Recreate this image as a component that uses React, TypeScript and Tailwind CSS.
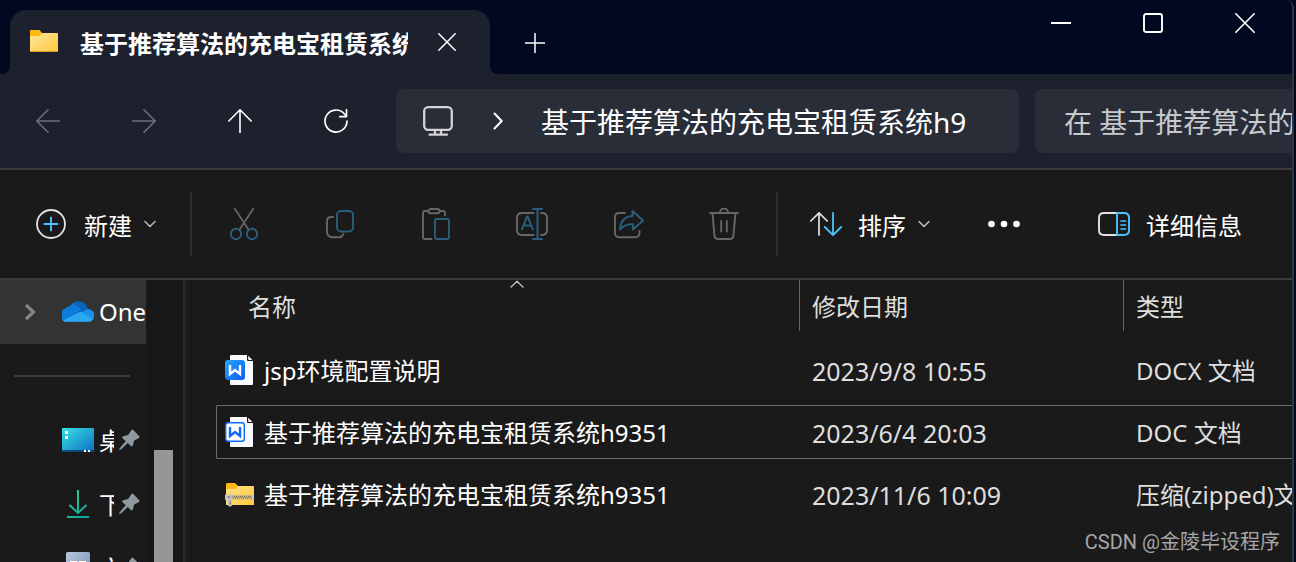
import React from "react";

type IconProps = { className?: string };

const line = {
  fill: "none",
  strokeLinecap: "round" as const,
  strokeLinejoin: "round" as const,
};

function FolderIcon() {
  return (
    <svg width="28" height="24" viewBox="0 0 28 24" aria-hidden="true">
      <defs>
        <linearGradient id="folderBody" x1="0" y1="0" x2="1" y2="1">
          <stop offset="0" stopColor="#ffe7a0" />
          <stop offset="1" stopColor="#ffc93a" />
        </linearGradient>
      </defs>
      <path d="M0 1q0-1 1-1h8.500l2.700 3.200L9 8H0z" fill="#fdb813" />
      <path d="M0 6h9l3.200-3H27q1 0 1 1v17.600H0z" fill="url(#folderBody)" />
      <path d="M0 21h28q0 1-1 1H1q-1 0-1-1z" fill="#dd9c20" />
    </svg>
  );
}

function ZipIcon() {
  return (
    <svg width="30" height="24" viewBox="0 0 30 24" aria-hidden="true">
      <defs>
        <linearGradient id="zipBody" x1="0" y1="0" x2="1" y2="1">
          <stop offset="0" stopColor="#ffe08a" />
          <stop offset="1" stopColor="#ffc93a" />
        </linearGradient>
      </defs>
      <path d="M1 1.2Q1 0 2.2 0H10l3.4 3.2L10 7H1z" fill="#fdb813" />
      <path d="M1 6h9l3-3h15q1 0 1 1v18H1z" fill="url(#zipBody)" />
      <path d="M7 12h22v5H7z" fill="#dcc27c" />
      <path d="M7 13.500h22" stroke="#6e6650" strokeWidth="1.400" strokeDasharray="1 1" />
      <path d="M8 15h21" stroke="#857c62" strokeWidth="1.400" strokeDasharray="1 1" />
      <rect x="27" y="12" width="2" height="4" fill="#c9c9c9" />
      <path d="M0 11.500h2v1h2v-1h3.500V17H7v5q0 1.400-1.400 1.400H4.400Q3 23.400 3 22v-5H0z" fill="#c4c4c4" />
      <path d="M2.500 14h3" stroke="#666" />
      <rect x="4.300" y="18.500" width="1.500" height="3" fill="#848484" />
    </svg>
  );
}

function WordIcon({ solid }: { solid: boolean }) {
  return (
    <svg width="30" height="32" viewBox="0 0 30 32" aria-hidden="true">
      <defs>
        <linearGradient id="wordBadge" x1="0" y1="0" x2="1" y2="1">
          <stop offset="0" stopColor="#2aa3ff" />
          <stop offset="1" stopColor="#0a5cf5" />
        </linearGradient>
      </defs>
      <path d="M6 0h16v5q0 1 1 1h5v23q0 1-1 1H6q-1 0-1-1V1q0-1 1-1z" fill="#f8faff" />
      <path d="M23.200.800 27.400 5h-3.200q-1 0-1-1z" fill="#ffffff" />
      <rect
        x="0.700"
        y="5.700"
        width="18.600"
        height="18.600"
        rx="2.500"
        fill={solid ? "url(#wordBadge)" : "#ffffff"}
        stroke={solid ? "url(#wordBadge)" : "#1268f5"}
        strokeWidth="1.400"
      />
      <path
        d="M5 10v9l5-4 5 4v-9"
        fill="none"
        stroke={solid ? "#ffffff" : "#1268f5"}
        strokeWidth="2.400"
      />
    </svg>
  );
}

function CloudIcon() {
  return (
    <svg width="32" height="22" viewBox="0 0 32 22" aria-hidden="true">
      <defs>
        <clipPath id="cloud">
          <path d="M6.500 20.800A6.500 6.500 0 0 1 3.600 7.600 8 8 0 0 1 8.300 5 9.600 9.600 0 0 1 26 8.200a6.300 6.300 0 0 1 0 12.600z" />
        </clipPath>
      </defs>
      <g clipPath="url(#cloud)">
        <path d="M0 0h32v22H0z" fill="#0a64bd" />
        <path d="M0 2h8.500c4 1 7 4 10.500 6L3 22H0z" fill="#0d7bdc" />
        <path d="M17 12.500 26 8h6v14h-8z" fill="#1a90e6" />
        <path d="M1 19.500 18.500 10.500 31 18v4H1z" fill="#2aa7ef" />
      </g>
    </svg>
  );
}

function DesktopIcon() {
  return (
    <svg width="32" height="24" viewBox="0 0 32 24" aria-hidden="true">
      <defs>
        <linearGradient id="desk" x1="0" y1="0" x2="1" y2="1">
          <stop offset="0" stopColor="#36e0e4" />
          <stop offset="1" stopColor="#0f6fc2" />
        </linearGradient>
      </defs>
      <rect width="32" height="24" rx="1" fill="url(#desk)" />
      <path d="M0 22h32v1q0 1-1 1H1q-1 0-1-1z" fill="#0b4a78" />
      <path d="M3 3h3v3H3zM3 8h3v3H3zM22 22h2v2h-2zM26 22h2v2h-2z" fill="#ffffff" />
    </svg>
  );
}

function DownloadIcon() {
  return (
    <svg width="32" height="28" viewBox="0 0 32 28" aria-hidden="true">
      <defs>
        <linearGradient id="down" gradientUnits="userSpaceOnUse" x1="8" y1="0" x2="26" y2="26">
          <stop offset="0" stopColor="#35cf85" />
          <stop offset="1" stopColor="#14a5a0" />
        </linearGradient>
      </defs>
      <path d="M16 0v23M7.500 15l8.500 8 8.500-8M5 27h22" fill="none" stroke="url(#down)" strokeWidth="2" />
    </svg>
  );
}

function DocumentIcon() {
  return (
    <svg width="32" height="32" viewBox="0 0 32 32" aria-hidden="true">
      <defs>
        <linearGradient id="docs" x1="0" y1="0" x2="1" y2="1">
          <stop offset="0" stopColor="#b8c7dc" />
          <stop offset="1" stopColor="#6f8fb8" />
        </linearGradient>
      </defs>
      <rect x="4" width="24" height="32" rx="1.500" fill="url(#docs)" />
      <path d="M8 10h7M17 10h7M8 16h16M8 22h16" stroke="#ffffff" strokeWidth="2" />
    </svg>
  );
}

function PinIcon() {
  return (
    <svg width="21" height="22" viewBox="0 0 21 22" className="shrink-0" aria-hidden="true">
      <path
        d="M12.300 1.200q1-1.200 2.200 0l5.600 5.700q1.100 1.200-.2 2.100l-4.600 2.500-1.500 5q-.7 1.700-2 .5l-3-3L2 20.600l-1.800.4.400-1.800 6.200-6.900-3.200-3.100q-1-1.300.5-1.900l5-1.400z"
        fill="#8d989f"
      />
    </svg>
  );
}

function ArrowIcon({ className }: IconProps) {
  return (
    <svg width="24" height="24" viewBox="0 0 24 24" className={className} aria-hidden="true">
      <path d="M23.500 12H1M12 .800.800 12 12 23.200" {...line} stroke="currentColor" strokeWidth="1.600" />
    </svg>
  );
}

function RefreshIcon() {
  return (
    <svg width="24" height="24" viewBox="0 0 24 24" aria-hidden="true">
      <path
        d="M23 12A11 11 0 1 1 20.300 4.800L22.500 7.200M22.500.800v6.800h-6.800"
        {...line}
        stroke="currentColor"
        strokeWidth="1.700"
      />
    </svg>
  );
}

function MonitorIcon() {
  return (
    <svg width="30" height="30" viewBox="0 0 30 30" aria-hidden="true">
      <rect x="1.200" y="1.200" width="27.600" height="22.600" rx="4" {...line} stroke="#d3d3d8" strokeWidth="2.300" />
      <path d="M12 24v4M18 24v4M6.500 28.700h17.500" {...line} stroke="#d3d3d8" strokeWidth="2.300" />
    </svg>
  );
}

function ChevronDown() {
  return (
    <svg width="12" height="8" viewBox="0 0 12 8" aria-hidden="true">
      <path d="m1 1.500 5 5 5-5" {...line} stroke="#bdbdbd" strokeWidth="1.500" />
    </svg>
  );
}

function PlusCircleIcon() {
  return (
    <svg width="30" height="30" viewBox="0 0 30 30" aria-hidden="true">
      <circle cx="15" cy="15" r="14" fill="none" stroke="#e2e2e2" strokeWidth="1.800" />
      <path d="M15 8.500v13M8.500 15h13" {...line} stroke="#4cc2ff" strokeWidth="1.900" />
    </svg>
  );
}

const gray = "#676767";
const blue = "#2a5f7c";

function CutIcon() {
  return (
    <svg width="32" height="32" viewBox="0 0 32 32" aria-hidden="true">
      <path d="M6.800.800 20.500 21.500M25.200.800 17.200 13M15.300 16 11.600 21.500" {...line} stroke={gray} strokeWidth="1.700" />
      <circle cx="8" cy="26" r="5.200" fill="none" stroke={blue} strokeWidth="1.900" />
      <circle cx="24" cy="26" r="5.200" fill="none" stroke={blue} strokeWidth="1.900" />
    </svg>
  );
}

function CopyIcon() {
  return (
    <svg width="32" height="32" viewBox="0 0 32 32" aria-hidden="true">
      <path d="M9 9H7.500Q3 9 3 13.500v10Q3 29.200 8.500 29.200H15q3.300 0 4.200-3" {...line} stroke={gray} strokeWidth="1.900" />
      <rect x="13" y="3" width="16" height="20.500" rx="4" fill="none" stroke={blue} strokeWidth="1.900" />
    </svg>
  );
}

function PasteIcon() {
  return (
    <svg width="32" height="32" viewBox="0 0 32 32" aria-hidden="true">
      <path d="M8 3H5Q3 3 3 5v24q0 2 2 2h6.500M20 3h3q2 0 2 2v2.500" {...line} stroke={gray} strokeWidth="1.900" />
      <rect x="8.500" y="1" width="11" height="4.300" rx="2.100" fill="none" stroke={gray} strokeWidth="1.900" />
      <rect x="15" y="11" width="14" height="20" rx="2" fill="none" stroke={blue} strokeWidth="1.900" />
    </svg>
  );
}

function RenameIcon() {
  return (
    <svg width="32" height="32" viewBox="0 0 32 32" aria-hidden="true">
      <path
        d="M17.500 5H6Q1 5 1 10v12q0 5 5 5h11.500M25 5h1q5 0 5 5v12q0 5-5 5h-1"
        {...line}
        stroke={gray}
        strokeWidth="1.900"
      />
      <path d="M17 1h9M17 31h9M21.500 1v30M6 21.500l5-13h.8l5 13M8 17.500h7.500" {...line} stroke={blue} strokeWidth="2" />
    </svg>
  );
}

function ShareIcon() {
  return (
    <svg width="32" height="32" viewBox="0 0 32 32" aria-hidden="true">
      <path d="M13 5H7Q3 5 3 9v16q0 4.200 4 4.200h16q4.500 0 4.500-4.200v-2" {...line} stroke={gray} strokeWidth="1.900" />
      <path
        d="M20.500 3 31 12.500 21 21.500v-5.200C15 16 11.500 17.500 8 21.500 8.500 13 12.500 8.500 20.500 8z"
        {...line}
        stroke={blue}
        strokeWidth="1.900"
      />
    </svg>
  );
}

function TrashIcon() {
  return (
    <svg width="32" height="32" viewBox="0 0 32 32" aria-hidden="true">
      <path
        d="M2 5h28M12 4.500a4 4 0 0 1 8 0M4.500 5.500l2 22.500q.4 3 3.500 3h12q3 0 3.400-3l2-22.500M13.200 13v10.500M18.800 13v10.500"
        {...line}
        stroke={gray}
        strokeWidth="1.900"
      />
    </svg>
  );
}

function SortIcon() {
  return (
    <svg width="32" height="24" viewBox="0 0 32 24" aria-hidden="true">
      <path d="M9 23V1M.800 9 9 .900 17.200 9" {...line} stroke="#e2e2e2" strokeWidth="1.700" />
      <path d="M23 1v22M14.800 15 23 23.100 31.200 15" {...line} stroke="#4cc2ff" strokeWidth="1.800" />
    </svg>
  );
}

function DetailsIcon() {
  return (
    <svg width="32" height="24" viewBox="0 0 32 24" aria-hidden="true">
      <path d="M18 1H6Q1 1 1 6v12q0 5 5 5h12" {...line} stroke="#e2e2e2" strokeWidth="1.900" />
      <path d="M19 1h7q5 0 5 5v12q0 5-5 5h-7z" {...line} stroke="#4cc2ff" strokeWidth="1.900" />
      <path d="M23 9h4.500M23 13h4.500M23 17h4.500" {...line} stroke="#4cc2ff" strokeWidth="1.700" />
    </svg>
  );
}

const tools = [
  { label: "剪切", Icon: CutIcon },
  { label: "复制", Icon: CopyIcon },
  { label: "粘贴", Icon: PasteIcon },
  { label: "重命名", Icon: RenameIcon },
  { label: "共享", Icon: ShareIcon },
  { label: "删除", Icon: TrashIcon },
];

const places = [
  { name: "桌面", Icon: DesktopIcon },
  { name: "下载", Icon: DownloadIcon },
  { name: "文档", Icon: DocumentIcon },
];

const files = [
  { name: "jsp环境配置说明", date: "2023/9/8 10:55", type: "DOCX 文档", icon: <WordIcon solid />, focused: false },
  {
    name: "基于推荐算法的充电宝租赁系统h9351",
    date: "2023/6/4 20:03",
    type: "DOC 文档",
    icon: <WordIcon solid={false} />,
    focused: true,
  },
  {
    name: "基于推荐算法的充电宝租赁系统h9351",
    date: "2023/11/6 10:09",
    type: "压缩(zipped)文件夹",
    icon: <ZipIcon />,
    focused: false,
  },
];

function TitleBar() {
  return (
    <header className="flex h-[74px] shrink-0 justify-between bg-[#000920]">
      <div className="flex items-end">
        <div className="h-2 w-[10px] bg-[#1c212d]">
          <div className="h-2 w-[10px] rounded-br-lg bg-[#000920]" />
        </div>
        <div className="flex h-16 w-[480px] items-center rounded-t-2xl bg-[#1c212d] pl-5">
          <FolderIcon />
          <h1 className="ml-[22px] w-[328px] overflow-hidden pt-1 text-2xl leading-8 font-bold whitespace-nowrap text-white">
            基于推荐算法的充电宝租赁系统h9351
          </h1>
          <button type="button" aria-label="关闭标签页" className="flex h-16 w-[78px] items-center justify-center">
            <svg width="18" height="18" viewBox="0 0 18 18" aria-hidden="true">
              <path d="m.800.800 16.400 16.400M17.200.800.800 17.200" {...line} stroke="#ffffff" strokeWidth="1.500" />
            </svg>
          </button>
        </div>
        <div className="h-2 w-2 bg-[#1c212d]">
          <div className="h-2 w-2 rounded-bl-lg bg-[#000920]" />
        </div>
        <button type="button" aria-label="新建标签页" className="flex h-[62px] w-[74px] items-center justify-center">
          <svg width="20" height="20" viewBox="0 0 20 20" aria-hidden="true">
            <path d="M10 0v20M0 10h20" stroke="#ffffff" strokeWidth="1.500" />
          </svg>
        </button>
      </div>
      <div className="flex h-[46px] pr-[1px] text-white">
        <button type="button" aria-label="最小化" className="flex w-[92px] items-center justify-center">
          <svg width="20" height="20" viewBox="0 0 20 20" aria-hidden="true">
            <path d="M0 10h20" stroke="currentColor" strokeWidth="2" />
          </svg>
        </button>
        <button type="button" aria-label="最大化" className="flex w-[92px] items-center justify-center">
          <svg width="20" height="20" viewBox="0 0 20 20" aria-hidden="true">
            <rect x="1" y="1" width="18" height="18" rx="2" fill="none" stroke="currentColor" strokeWidth="1.900" />
          </svg>
        </button>
        <button type="button" aria-label="关闭" className="flex w-[92px] items-center justify-center">
          <svg width="20" height="20" viewBox="0 0 20 20" aria-hidden="true">
            <path d="m.800.800 18.400 18.400M19.200.800.800 19.200" {...line} stroke="currentColor" strokeWidth="1.600" />
          </svg>
        </button>
      </div>
    </header>
  );
}

function NavigationBar() {
  return (
    <nav className="flex h-24 shrink-0 items-center border-b-2 border-[#3a3838] bg-[#1c212d]">
      <button type="button" aria-label="后退" disabled className="flex h-16 w-24 items-center justify-center text-[#6d7078]">
        <ArrowIcon />
      </button>
      <button type="button" aria-label="前进" disabled className="flex h-16 w-24 items-center justify-center text-[#6d7078]">
        <ArrowIcon className="rotate-180" />
      </button>
      <button type="button" aria-label="向上" className="flex h-16 w-24 items-center justify-center text-white">
        <ArrowIcon className="rotate-90" />
      </button>
      <button type="button" aria-label="刷新" className="flex h-16 w-24 items-center justify-center text-white">
        <RefreshIcon />
      </button>
      <div className="ml-3 flex h-16 min-w-0 flex-1 items-center rounded-lg bg-[#282d38] pl-[27px]">
        <MonitorIcon />
        <svg width="10" height="18" viewBox="0 0 10 18" className="ml-10 shrink-0" aria-hidden="true">
          <path d="m1.500 1.500 7.200 7.500-7.200 7.500" {...line} stroke="#ffffff" strokeWidth="2" />
        </svg>
        <button type="button" className="ml-[38px] pt-0.5 text-[28px] leading-9 whitespace-nowrap text-white">
          基于推荐算法的充电宝租赁系统h9
        </button>
      </div>
      <input
        type="text"
        aria-label="搜索"
        placeholder="在 基于推荐算法的充电宝租赁系统h9351 中搜索"
        className="ml-4 h-16 w-[257px] rounded-l-lg bg-[#282d38] pt-0.5 pl-[29px] text-[28px] text-white outline-none placeholder:text-[#c9cacd]"
      />
    </nav>
  );
}

function CommandBar() {
  return (
    <div role="toolbar" className="flex h-[110px] shrink-0 items-center border-b-2 border-[#3a3a3a] bg-[#1a1a1a] text-2xl leading-8 text-white">
      <button type="button" className="flex h-16 w-[190px] items-center pl-9">
        <PlusCircleIcon />
        <span className="mr-3 ml-[18px] pt-1">新建</span>
        <ChevronDown />
      </button>
      <div className="mr-1 h-16 w-[2px] bg-[#2e2e2e]" />
      {tools.map(({ label, Icon }) => (
        <button key={label} type="button" aria-label={label} disabled className="flex h-16 w-24 items-center justify-center">
          <Icon />
        </button>
      ))}
      <div className="ml-1 h-16 w-[2px] bg-[#2e2e2e]" />
      <button type="button" className="flex h-16 items-center pl-8">
        <SortIcon />
        <span className="mr-3 ml-4 pt-1">排序</span>
        <ChevronDown />
      </button>
      <button type="button" aria-label="查看更多" className="ml-[26px] flex h-16 w-24 items-center justify-center">
        <svg width="32" height="8" viewBox="0 0 32 8" fill="#ffffff" aria-hidden="true">
          <circle cx="3.500" cy="4" r="3.300" />
          <circle cx="16" cy="4" r="3.300" />
          <circle cx="28.500" cy="4" r="3.300" />
        </svg>
      </button>
      <button type="button" className="mr-[50px] ml-auto flex h-16 items-center gap-4">
        <DetailsIcon />
        <span className="pt-1">详细信息</span>
      </button>
    </div>
  );
}

function Sidebar() {
  return (
    <aside className="flex w-[188px] shrink-0 text-2xl leading-8 text-white">
      <div className="w-[146px] shrink-0 overflow-hidden bg-[#1a1a1a]">
        <a href="#onedrive" className="flex h-16 items-center bg-[#333333] pl-6 whitespace-nowrap">
          <svg width="12" height="18" viewBox="0 0 12 18" className="mr-[26px] shrink-0" aria-hidden="true">
            <path d="m2 2 7.500 7L2 16" fill="none" stroke="#858585" strokeWidth="3.200" />
          </svg>
          <span className="mr-[5px] shrink-0">
            <CloudIcon />
          </span>
          OneDrive
        </a>
        <div className="flex h-16 items-center">
          <hr className="mr-4 ml-3.5 flex-1 border-t-2 border-[#3a3a3a]" />
        </div>
        {places.map(({ name, Icon }) => (
          <a key={name} href={`#${name}`} className="flex h-16 items-center pl-[62px]">
            <Icon />
            <span className="mr-[5px] ml-[5px] w-[15px] shrink-0 overflow-hidden pt-0.5 whitespace-nowrap">{name}</span>
            <PinIcon />
          </a>
        ))}
      </div>
      <div className="w-[37px] bg-[#171717] pt-[170px] pl-2">
        <div className="h-full w-[19px] bg-[#969696]" />
      </div>
      <div className="w-[2px] bg-[#2b2b2b]" />
      <div className="w-[3px] bg-[#1e1e1e]" />
    </aside>
  );
}

function FileList() {
  return (
    <main className="min-w-0 flex-1 overflow-hidden bg-[#1a1a1a] pl-7 text-2xl leading-8">
      <table className="-mt-2 w-full table-fixed border-separate border-spacing-x-0 border-spacing-y-2 text-left whitespace-nowrap text-[#dedede]">
        <colgroup>
          <col className="w-[583px]" />
          <col className="w-[324px]" />
          <col />
        </colgroup>
        <thead>
          <tr className="h-[55px] align-top">
            <th scope="col" className="relative p-0 pl-8 font-normal">
              <svg width="14" height="8" viewBox="0 0 14 8" className="absolute top-0 left-[294px]" aria-hidden="true">
                <path d="m.800 7.200 6.200-6 6.200 6" {...line} stroke="#c4c4c4" strokeWidth="1.200" />
              </svg>
              <div className="flex h-[51px] items-center pt-0.5">名称</div>
            </th>
            <th scope="col" className="p-0 font-normal">
              <div className="flex h-[51px] items-center border-l border-[#636363] pt-0.5 pl-3">修改日期</div>
            </th>
            <th scope="col" className="p-0 font-normal">
              <div className="flex h-[51px] items-center border-l border-[#636363] pt-0.5 pl-3">类型</div>
            </th>
          </tr>
        </thead>
        <tbody>
          {files.map((file) => {
            const edge = file.focused ? "border-[#6b6b6b]" : "border-transparent";
            return (
              <tr key={file.date} className="h-[54px]">
                <td className={`rounded-l-xs border-y border-l p-0 pt-0.5 pl-2 text-white ${edge}`}>
                  <div className="flex items-center gap-[9px]">
                    {file.icon}
                    {file.name}
                  </div>
                </td>
                <td className={`border-y p-0 pt-0.5 pl-[13px] text-[25px] ${edge}`}>{file.date}</td>
                <td className={`overflow-hidden border-y p-0 pt-0.5 pl-[13px] ${edge}`}>{file.type}</td>
              </tr>
            );
          })}
        </tbody>
      </table>
    </main>
  );
}

export default function App() {
  return (
    <div className="h-screen overflow-hidden bg-[#00081c] pr-[2px] font-['Noto_Sans','Noto_Sans_CJK_SC',sans-serif]">
      <div className="relative flex h-full flex-col overflow-hidden rounded-tr-lg border-r-2 border-[#2f3642] bg-[#1a1a1a]">
        <TitleBar />
        <NavigationBar />
        <CommandBar />
        <div className="flex min-h-0 flex-1">
          <Sidebar />
          <FileList />
        </div>
        <p className="absolute right-3 bottom-1 font-['Roboto','Noto_Sans_CJK_SC',sans-serif] text-xl leading-8 text-[#a6a6a6]">
          CSDN @金陵毕设程序
        </p>
      </div>
    </div>
  );
}
